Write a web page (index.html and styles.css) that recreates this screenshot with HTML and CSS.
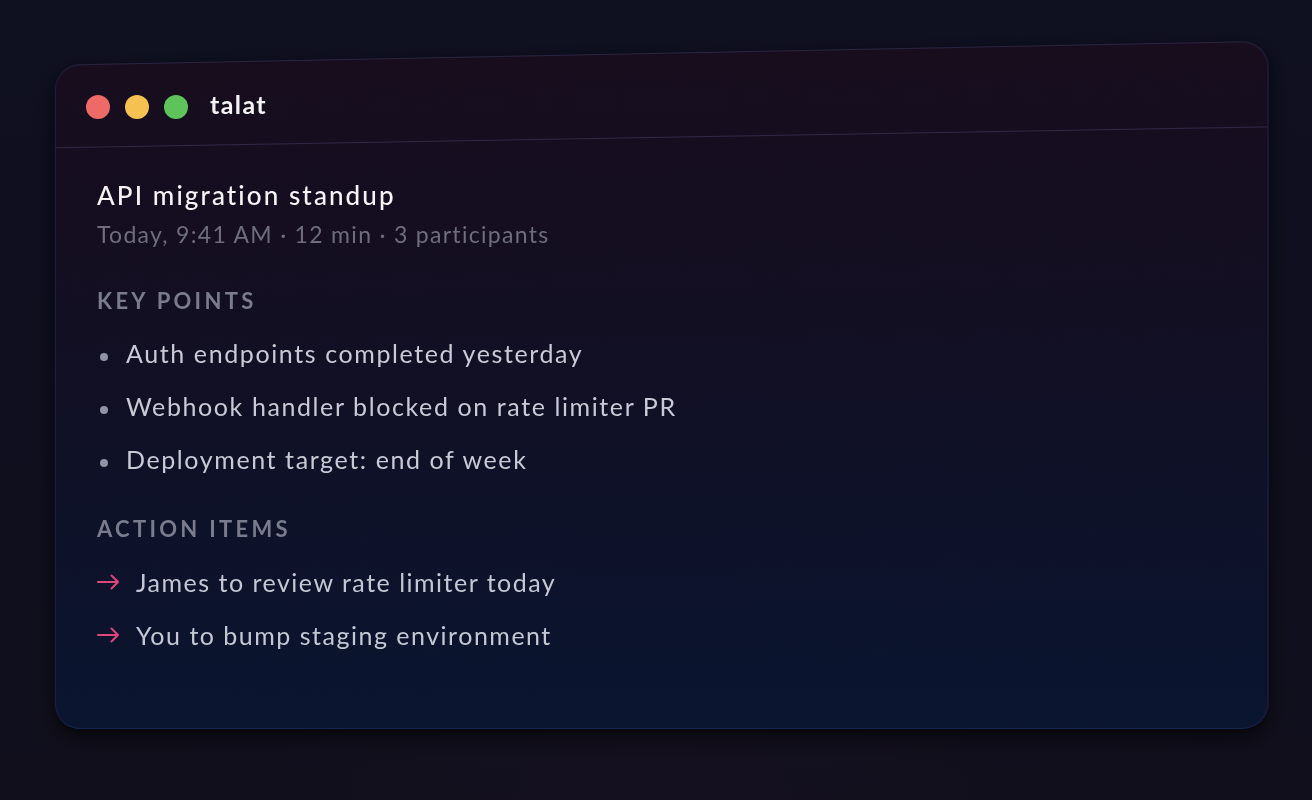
FILE: index.html
```html
<!DOCTYPE html>
<html lang="en">
<head>
<meta charset="utf-8">
<title>talat</title>
<link rel="stylesheet" href="styles.css">
</head>
<body>
  <main class="window">
    <header class="titlebar">
      <span class="dot dot-red"></span>
      <span class="dot dot-yellow"></span>
      <span class="dot dot-green"></span>
      <span class="app-name">talat</span>
    </header>
    <section class="content">
      <h1 class="title">API migration standup</h1>
      <p class="meta">Today, 9:41 AM · 12 min · 3 participants</p>

      <h2 class="section-label label-points">KEY POINTS</h2>
      <ul class="points">
        <li class="point"><span class="bullet"></span><span>Auth endpoints completed yesterday</span></li>
        <li class="point"><span class="bullet"></span><span>Webhook handler blocked on rate limiter PR</span></li>
        <li class="point"><span class="bullet"></span><span>Deployment target: end of week</span></li>
      </ul>

      <h2 class="section-label label-actions">ACTION ITEMS</h2>
      <ul class="actions">
        <li class="action">
          <svg class="arrow" width="22" height="16" viewBox="0 0 22 16" aria-hidden="true"><path d="M1 8H21M14.5 1.5L21 8L14.5 14.5" fill="none" stroke="#e0457b" stroke-width="2" stroke-linecap="round" stroke-linejoin="round"/></svg>
          <span>James to review rate limiter today</span>
        </li>
        <li class="action">
          <svg class="arrow" width="22" height="16" viewBox="0 0 22 16" aria-hidden="true"><path d="M1 8H21M14.5 1.5L21 8L14.5 14.5" fill="none" stroke="#e0457b" stroke-width="2" stroke-linecap="round" stroke-linejoin="round"/></svg>
          <span>You to bump staging environment</span>
        </li>
      </ul>
    </section>
  </main>
</body>
</html>
```
FILE: styles.css
```css
* { box-sizing: border-box; }
html, body { margin: 0; height: 100%; }
body {
  background:
    radial-gradient(ellipse at 50% 110%, #14101f 0%, rgba(20,16,31,0) 60%),
    linear-gradient(180deg, #0f1020 0%, #0f0f1e 60%, #110f1c 100%);
  padding: 53px 0 0 44px;
  font-family: "Lato", "Open Sans", sans-serif;
  font-variant-ligatures: none;
  line-height: 1.2;
  overflow: hidden;
}
.window {
  position: relative;
  width: 1214px;
  height: 676px;
  padding-top: 12px;
  isolation: isolate;
}
/* window frame, drawn with a slight perspective tilt behind the content */
.window::before {
  content: "";
  position: absolute;
  inset: 0;
  z-index: -1;
  border-radius: 26px;
  border: 1.5px solid;
  border-color: #2a2540 #211f46 #14254f #211f46;
  background:
    linear-gradient(180deg, transparent 83px, rgba(62,48,78,0.75) 83px, rgba(62,48,78,0.75) 84.5px, transparent 84.5px),
    linear-gradient(180deg, #170d1d 0%, #140e21 30%, #0f1127 60%, #0a1530 100%);
  box-shadow: 0 10px 24px rgba(0,0,0,0.55), 0 2px 6px rgba(0,0,0,0.4);
  transform-origin: 50% 100%;
  transform: perspective(1000px) rotateY(-1.67deg);
}
.titlebar {
  height: 83px;
  display: flex;
  align-items: center;
  padding-left: 42px;
  gap: 15px;
}
.dot { width: 24px; height: 24px; border-radius: 50%; flex: none; }
.dot-red { background: #ee6a66; }
.dot-yellow { background: #f5c150; }
.dot-green { background: #5fc35c; }
.app-name {
  margin: 0 0 6px 7px;
  color: #f3f3f5;
  font-weight: 700;
  font-size: 25px;
  letter-spacing: 1.4px;
}
.content { padding: 32px 0 0 53px; }
.title {
  margin: 0;
  color: #f4f4f6;
  font-weight: 500;
  font-size: 26px;
  letter-spacing: 2.1px;
}
.meta {
  margin: 9.4px 0 0;
  color: #6e6d80;
  font-size: 23px;
  letter-spacing: 1.3px;
}
.section-label {
  margin: 0;
  color: #7a7c8e;
  font-weight: 700;
  font-size: 22px;
  letter-spacing: 3.3px;
}
.label-points { margin-top: 39.4px; }
.label-actions { margin-top: 30.5px; }
.points, .actions { list-style: none; margin: 0; padding: 0; }
.points { margin-top: 12.1px; }
.actions { margin-top: 13.5px; }
.point, .action {
  display: flex;
  align-items: center;
  height: 53px;
  font-size: 25px;
}
.point { gap: 18px; color: #c8cad5; letter-spacing: 1.6px; }
.bullet {
  width: 8px;
  height: 8px;
  border-radius: 50%;
  background: #8f93a3;
  margin: 8px 0 0 3px;
  flex: none;
}
.action { gap: 17px; color: #c4c8d4; letter-spacing: 1.5px; }
.arrow { flex: none; }
```
